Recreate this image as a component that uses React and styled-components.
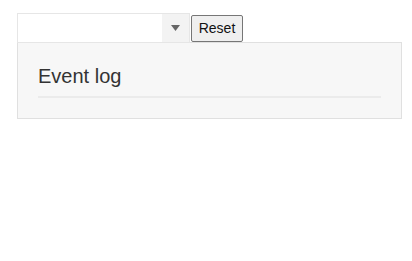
import React from "react";
import styled, { createGlobalStyle } from "styled-components";

const Global = createGlobalStyle`
  html, body { margin: 0; padding: 0; background: #fff; }
  body { font-family: "Liberation Sans", Arial, sans-serif; }
`;

const Page = styled.div`
  padding: 13px 0 0 17px;
  width: 385px;
`;

const Toolbar = styled.div`
  display: flex;
  align-items: center;
  gap: 1px;
`;

const SelectBox = styled.div`
  box-sizing: border-box;
  width: 173px;
  height: 30px;
  display: flex;
  border: 1px solid #e6e6e6;
  background: #fff;
`;

const SelectValue = styled.div`
  flex: 1;
`;

const ArrowZone = styled.div`
  width: 27px;
  display: flex;
  align-items: center;
  justify-content: center;
  background: #f3f3f3;
`;

const Button = styled.button`
  box-sizing: border-box;
  height: 27px;
  width: 52px;
  padding: 0;
  font-family: "Liberation Sans", Arial, sans-serif;
  font-size: 14px;
  color: #111;
  background: #efefef;
  border: 1px solid #767676;
  border-radius: 2px;
`;

const Panel = styled.div`
  box-sizing: border-box;
  width: 385px;
  height: 77px;
  margin-top: -1px;
  background: #f7f7f7;
  border: 1px solid #e0e0e0;
  padding: 22px 20px 0;
`;

const Title = styled.h3`
  margin: 0;
  font-weight: normal;
  font-size: 20px;
  line-height: 23px;
  color: #333;
  padding-bottom: 8px;
  border-bottom: 2px solid #ebebeb;
`;

export default function App() {
  return (
    <>
      <Global />
      <Page>
        <Toolbar>
          <SelectBox>
            <SelectValue />
            <ArrowZone>
              <svg width="9" height="6" viewBox="0 0 9 6">
                <path d="M0 0 H9 L4.5 6 Z" fill="#666" />
              </svg>
            </ArrowZone>
          </SelectBox>
          <Button>Reset</Button>
        </Toolbar>
        <Panel>
          <Title>Event log</Title>
        </Panel>
      </Page>
    </>
  );
}
